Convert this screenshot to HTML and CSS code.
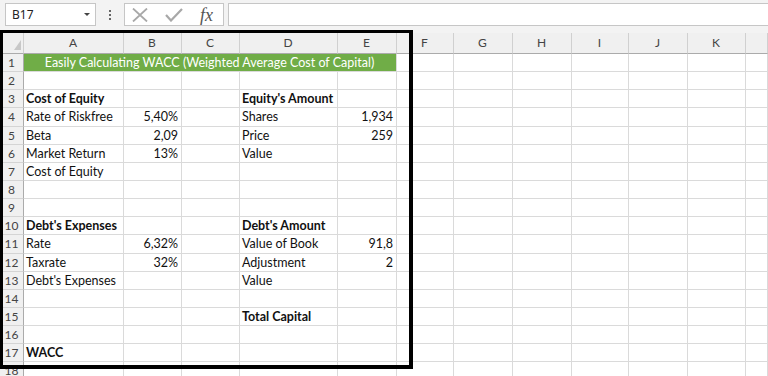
FILE: index.html
```html
<!DOCTYPE html>
<html lang="en">
<head>
  <meta charset="UTF-8" />
  <title>WACC</title>
  <link rel="stylesheet" href="styles.css">
</head>
<body>
  <div class="formula-bar">
    <div class="name-box"><span>B17</span><span class="caret"></span></div>
    <div class="grip"><i></i><i></i><i></i></div>
    <div class="fx-box">
      <svg class="ico-x" width="16" height="14" viewBox="0 0 16 14"><path d="M1 0.5 L15 13.5 M15 0.5 L1 13.5" stroke="#a8a8a8" stroke-width="1.8" fill="none"/></svg>
      <svg class="ico-ok" width="18" height="14" viewBox="0 0 18 14"><path d="M1 7 L6 12.5 L17 1" stroke="#a8a8a8" stroke-width="2.2" fill="none"/></svg>
      <span class="fx">fx</span>
    </div>
    <div class="formula-input"></div>
  </div>

  <div class="sheet">
    <div class="hd corner"></div><div class="hd">A</div><div class="hd">B</div><div class="hd">C</div><div class="hd">D</div><div class="hd">E</div><div class="hd">F</div><div class="hd">G</div><div class="hd">H</div><div class="hd">I</div><div class="hd">J</div><div class="hd">K</div><div class="hd"></div>

    <div class="rh">1</div><div class="title">Easily Calculating WACC (Weighted Average Cost of Capital)</div><div></div><div></div><div></div><div></div><div></div><div></div><div></div>
    <div class="rh">2</div><div></div><div></div><div></div><div></div><div></div><div></div><div></div><div></div><div></div><div></div><div></div><div></div>
    <div class="rh">3</div><div class="b">Cost of Equity</div><div></div><div></div><div class="b">Equity's Amount</div><div></div><div></div><div></div><div></div><div></div><div></div><div></div><div></div>
    <div class="rh">4</div><div>Rate of Riskfree</div><div class="num">5,40%</div><div></div><div>Shares</div><div class="num">1,934</div><div></div><div></div><div></div><div></div><div></div><div></div><div></div>
    <div class="rh">5</div><div>Beta</div><div class="num">2,09</div><div></div><div>Price</div><div class="num">259</div><div></div><div></div><div></div><div></div><div></div><div></div><div></div>
    <div class="rh">6</div><div>Market Return</div><div class="num">13%</div><div></div><div>Value</div><div></div><div></div><div></div><div></div><div></div><div></div><div></div><div></div>
    <div class="rh">7</div><div>Cost of Equity</div><div></div><div></div><div></div><div></div><div></div><div></div><div></div><div></div><div></div><div></div><div></div>
    <div class="rh">8</div><div></div><div></div><div></div><div></div><div></div><div></div><div></div><div></div><div></div><div></div><div></div><div></div>
    <div class="rh">9</div><div></div><div></div><div></div><div></div><div></div><div></div><div></div><div></div><div></div><div></div><div></div><div></div>
    <div class="rh">10</div><div class="b">Debt's Expenses</div><div></div><div></div><div class="b">Debt's Amount</div><div></div><div></div><div></div><div></div><div></div><div></div><div></div><div></div>
    <div class="rh">11</div><div>Rate</div><div class="num">6,32%</div><div></div><div>Value of Book</div><div class="num">91,8</div><div></div><div></div><div></div><div></div><div></div><div></div><div></div>
    <div class="rh">12</div><div>Taxrate</div><div class="num">32%</div><div></div><div>Adjustment</div><div class="num">2</div><div></div><div></div><div></div><div></div><div></div><div></div><div></div>
    <div class="rh">13</div><div>Debt's Expenses</div><div></div><div></div><div>Value</div><div></div><div></div><div></div><div></div><div></div><div></div><div></div><div></div>
    <div class="rh">14</div><div></div><div></div><div></div><div></div><div></div><div></div><div></div><div></div><div></div><div></div><div></div><div></div>
    <div class="rh">15</div><div></div><div></div><div></div><div class="b">Total Capital</div><div></div><div></div><div></div><div></div><div></div><div></div><div></div><div></div>
    <div class="rh">16</div><div></div><div></div><div></div><div></div><div></div><div></div><div></div><div></div><div></div><div></div><div></div><div></div>
    <div class="rh">17</div><div class="b">WACC</div><div></div><div></div><div></div><div></div><div></div><div></div><div></div><div></div><div></div><div></div><div></div>
    <div class="rh">18</div><div></div><div></div><div></div><div></div><div></div><div></div><div></div><div></div><div></div><div></div><div></div><div></div>
  </div>

  <!-- rectangle shape drawn over the sheet -->
  <div class="frame"></div>
</body>
</html>
```

FILE: styles.css
```css
body {
  margin: 0;
  width: 768px;
  height: 376px;
  overflow: hidden;
  position: relative;
  background: #f3f3f3;
  font-family: Lato, "Liberation Sans", sans-serif;
}

/* formula bar */
.formula-bar {
  display: flex;
  align-items: flex-start;
  height: 33px;
  box-sizing: border-box;
  padding: 3px 0 0 5px;
}
.name-box {
  width: 91px;
  height: 23px;
  box-sizing: border-box;
  border: 1px solid #c6c6c6;
  background: #fff;
  display: flex;
  align-items: center;
  justify-content: space-between;
  padding: 0 5px 0 6px;
  font: 12px "Noto Sans", sans-serif;
  color: #222;
}
.caret {
  width: 0;
  height: 0;
  border-left: 3px solid transparent;
  border-right: 3px solid transparent;
  border-top: 3px solid #444;
}
.grip {
  width: 28px;
  display: flex;
  flex-direction: column;
  align-items: center;
  gap: 2px;
  padding-top: 7px;
}
.grip i {
  width: 2px;
  height: 2px;
  background: #666;
}
.fx-box {
  width: 100px;
  height: 23px;
  box-sizing: border-box;
  border: 1px solid #c6c6c6;
  background: #fff;
  display: flex;
  align-items: center;
  padding-left: 7px;
}
.ico-ok {
  margin-left: 17px;
}
.fx {
  margin-left: 17px;
  font: italic 18px "Liberation Serif", serif;
  color: #555;
  line-height: 20px;
}
.formula-input {
  flex: 1;
  margin-left: 4px;
  height: 23px;
  box-sizing: border-box;
  border: 1px solid #c6c6c6;
  border-right: none;
  background: #fff;
}

/* sheet grid */
.sheet {
  display: grid;
  grid-template-columns: 24px 100px 58px 58px 98px 59px 57px 59px 59px 57px 59px 58px 1fr;
  grid-template-rows: 21px;
  grid-auto-rows: 18.15px;
  background: #fff;
}
.sheet > div {
  box-sizing: border-box;
  border-right: 1px solid #dadada;
  border-bottom: 1px solid #dadada;
  padding: 0 3px 0 2px;
  font-size: 12.5px;
  line-height: 18px;
  color: #111;
  white-space: nowrap;
  overflow: hidden;
}
.sheet > .hd {
  background: #f0f0f0;
  color: #444;
  text-align: center;
  line-height: 20px;
  font-size: 12px;
  border-right-color: #d0d0d0;
  border-bottom-color: #ababab;
}
.sheet > .rh {
  background: #f0f0f0;
  color: #444;
  text-align: center;
  padding: 0;
  font-size: 12px;
  border-right-color: #ababab;
  border-bottom-color: #d4d4d4;
}
.corner {
  position: relative;
}
.corner::after {
  content: "";
  position: absolute;
  right: 2px;
  bottom: 3px;
  width: 0;
  height: 0;
  border-left: 7px solid transparent;
  border-bottom: 10px solid #c8c8c8;
}
.sheet > .title {
  grid-column: span 5;
  background: #70ad47;
  color: #fff;
  text-align: center;
}
.num {
  text-align: right;
}
.b {
  font-weight: bold;
}

.frame {
  position: absolute;
  left: 0;
  top: 30px;
  width: 413px;
  height: 339px;
  box-sizing: border-box;
  border: 3px solid #000;
  border-right-width: 4px;
  border-bottom-width: 4px;
  pointer-events: none;
}
```
